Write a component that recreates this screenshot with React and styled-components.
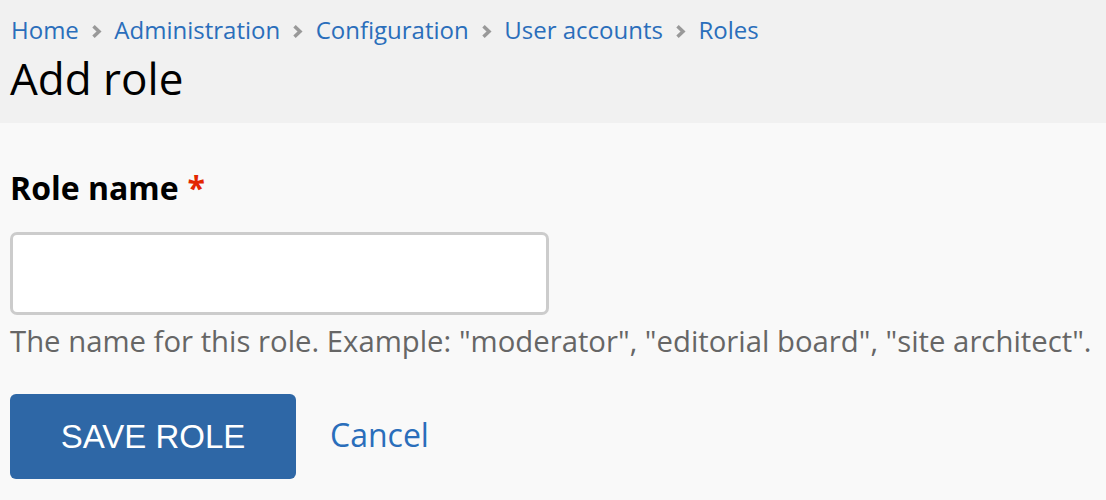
import styled, { createGlobalStyle } from 'styled-components'

const GlobalStyle = createGlobalStyle`
  html, body {
    margin: 0;
    padding: 0;
    background: #f9f9f9;
    font-family: "Open Sans", "Noto Sans", sans-serif;
  }
`

const Header = styled.header`
  background: #f1f1f1;
  padding: 14px 10px 0 10px;
  height: 109px;
  box-sizing: content-box;
`

const Crumbs = styled.nav`
  display: flex;
  align-items: center;
  font-size: 24px;
  line-height: 32px;
`

const Crumb = styled.a`
  color: #2a6ebb;
  text-decoration: none;
  margin-left: ${props => (props.first ? '1px' : '0')};
`

const Sep = styled.span`
  display: inline-flex;
  align-items: center;
  width: 35.5px;
  justify-content: center;
  padding-top: 3px;
`

const Title = styled.h1`
  margin: 4px 0 0 0;
  font-size: 44px;
  font-weight: 400;
  line-height: 56px;
  color: #000;
`

const Main = styled.main`
  padding: 47px 10px 0 10px;
`

const Label = styled.label`
  display: flex;
  align-items: baseline;
  gap: 9px;
  font-size: 32px;
  font-weight: 700;
  line-height: 36px;
  color: #000;
`

const Star = styled.span`
  color: #e32700;
`

const Input = styled.input`
  display: block;
  margin-top: 26px;
  width: 539px;
  height: 83px;
  box-sizing: border-box;
  border: 3px solid #ccc;
  border-radius: 7px;
  background: #fff;
  font-size: 24px;
  padding: 0 14px;
  &:focus {
    outline: none;
  }
`

const Help = styled.div`
  margin-top: 6px;
  font-size: 29.3px;
  line-height: 40px;
  color: #666;
  white-space: nowrap;
`

const Actions = styled.div`
  display: flex;
  align-items: center;
  gap: 34px;
  margin-top: 33px;
`

const Button = styled.button`
  width: 286px;
  height: 85px;
  border: none;
  border-radius: 6px;
  background: #2e67a6;
  color: #fff;
  font-family: "Liberation Sans", Arial, sans-serif;
  font-size: 33px;
  cursor: pointer;
`

const CancelLink = styled.a`
  color: #2a6ebb;
  font-size: 32px;
  line-height: 40px;
  margin-top: -4px;
  text-decoration: none;
`

const Chevron = () => (
  <svg width="11" height="13" viewBox="0 0 11 13">
    <path d="M2.5 1.3 L8 6.5 L2.5 11.7" fill="none" stroke="#999" strokeWidth="3.5" />
  </svg>
)

const items = ['Home', 'Administration', 'Configuration', 'User accounts', 'Roles']

export default function App() {
  return (
    <>
      <GlobalStyle />
      <Header>
        <Crumbs>
          {items.map((item, i) => (
            <span key={item} style={{ display: 'contents' }}>
              {i > 0 && <Sep><Chevron /></Sep>}
              <Crumb href="#" first={i === 0}>{item}</Crumb>
            </span>
          ))}
        </Crumbs>
        <Title>Add role</Title>
      </Header>
      <Main>
        <Label htmlFor="role">Role name <Star>*</Star></Label>
        <Input id="role" type="text" />
        <Help>The name for this role. Example: "moderator", "editorial board", "site architect".</Help>
        <Actions>
          <Button>SAVE ROLE</Button>
          <CancelLink href="#">Cancel</CancelLink>
        </Actions>
      </Main>
    </>
  )
}
